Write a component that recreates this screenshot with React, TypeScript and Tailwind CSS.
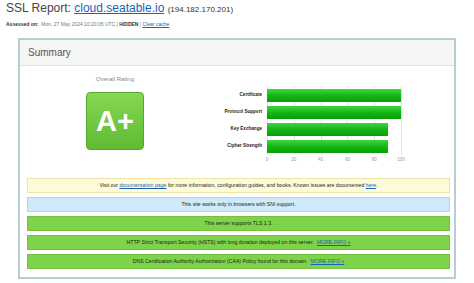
const bars = [
  { label: "Certificate", value: 100 },
  { label: "Protocol Support", value: 100 },
  { label: "Key Exchange", value: 90 },
  { label: "Cipher Strength", value: 90 },
];

function Notice({ tone, children }: { tone: "yellow" | "blue" | "green"; children: React.ReactNode }) {
  const tones = {
    yellow: "bg-[#fffbd9] border-[#ece3a8]",
    blue: "bg-[#cfeaf8] border-[#aed3e6]",
    green: "bg-[#7fd34b] border-[#72c23f]",
  };
  return (
    <div className={`h-[15px] border flex items-center justify-center text-[5.2px] text-[#1c1c1c] ${tones[tone]}`}>
      <span>{children}</span>
    </div>
  );
}

function Chart() {
  return (
    <div className="flex mt-[20px]">
      <div className="w-[52px] pt-[3px] flex flex-col gap-[4px]">
        {bars.map((b) => (
          <div key={b.label} className="h-[13px] flex items-center justify-end text-[4.6px] font-bold text-[#222]">
            {b.label}
          </div>
        ))}
      </div>
      <div className="ml-[5px] w-[134px]">
        <div className="relative pt-[3px] pb-[2px] flex flex-col gap-[4px]">
          {[0, 20, 40, 60, 80, 100].map((t) => (
            <div
              key={t}
              className="absolute top-0 bottom-0 w-px bg-[#e2e2e2]"
              style={{ left: `${t}%` }}
            />
          ))}
          {bars.map((b) => (
            <div key={b.label} className="relative h-[13px]">
              <div
                className="h-full bg-linear-to-b from-[#3bd83b] via-[#13b613] to-[#079f07]"
                style={{ width: `${b.value}%` }}
              />
            </div>
          ))}
        </div>
        <div className="relative h-[6px] mt-[2px] text-[4.5px] leading-[6px] text-[#9a9a9a]">
          {[0, 20, 40, 60, 80, 100].map((t) => (
            <span key={t} className="absolute -translate-x-1/2" style={{ left: `${t}%` }}>
              {t}
            </span>
          ))}
        </div>
      </div>
    </div>
  );
}

export default function App() {
  return (
    <div className="w-[474px] h-[283px] overflow-hidden bg-white font-['Liberation_Sans',Arial,sans-serif]">
      <div className="pt-[1px] pl-[6px] text-[12px] leading-[14px] text-[#444] whitespace-nowrap">
        SSL Report: <a href="#" className="text-[#1a62b8] underline">cloud.seatable.io</a>{" "}
        <span className="text-[8px] text-[#333]">(194.182.170.201)</span>
      </div>
      <div className="mt-[4px] pl-[6px] text-[5px] leading-[6px] text-[#777] whitespace-nowrap">
        <b className="text-[#333]">Assessed on:</b>&nbsp; Mon, 27 May 2024 10:20:05 UTC | <b className="text-[#333]">HIDDEN</b> |{" "}
        <a href="#" className="text-[#1a62b8] underline">Clear cache</a>
      </div>

      <div className="mt-[11px] ml-[18px] w-[438px] h-[241px] border-2 border-[#b6ced1] flex flex-col">
        <div className="h-[26px] shrink-0 bg-[#f6f6f6] border-b border-[#e0e0e0] flex items-center pl-[8px] text-[10px] text-[#555]">
          Summary
        </div>
        <div className="h-[104px] flex">
          <div className="w-[190px] flex flex-col items-center pt-[10px]">
            <div className="text-[6px] leading-[6px] text-[#888]">Overall Rating</div>
            <div className="mt-[10px] w-[58px] h-[58px] rounded-[4px] border border-[#56a82d] bg-linear-to-b from-[#86d752] to-[#5fbb33] flex items-center justify-center text-white font-bold text-[29px] leading-none">
              A+
            </div>
          </div>
          <Chart />
        </div>
        <div className="pt-[8px] pl-[7px] pr-[4px] flex flex-col gap-[4px]">
          <Notice tone="yellow">
            Visit our <a href="#" className="text-[#1a62b8] underline">documentation page</a> for more information, configuration guides, and books. Known issues are documented{" "}
            <a href="#" className="text-[#1a62b8] underline">here</a>.
          </Notice>
          <Notice tone="blue">This site works only in browsers with SNI support.</Notice>
          <Notice tone="green">This server supports TLS 1.3.</Notice>
          <Notice tone="green">
            HTTP Strict Transport Security (HSTS) with long duration deployed on this server.&nbsp;{" "}
            <a href="#" className="text-[#1a62b8] underline">MORE INFO »</a>
          </Notice>
          <Notice tone="green">
            DNS Certification Authority Authorization (CAA) Policy found for this domain.&nbsp;{" "}
            <a href="#" className="text-[#1a62b8] underline">MORE INFO »</a>
          </Notice>
        </div>
      </div>
    </div>
  );
}
